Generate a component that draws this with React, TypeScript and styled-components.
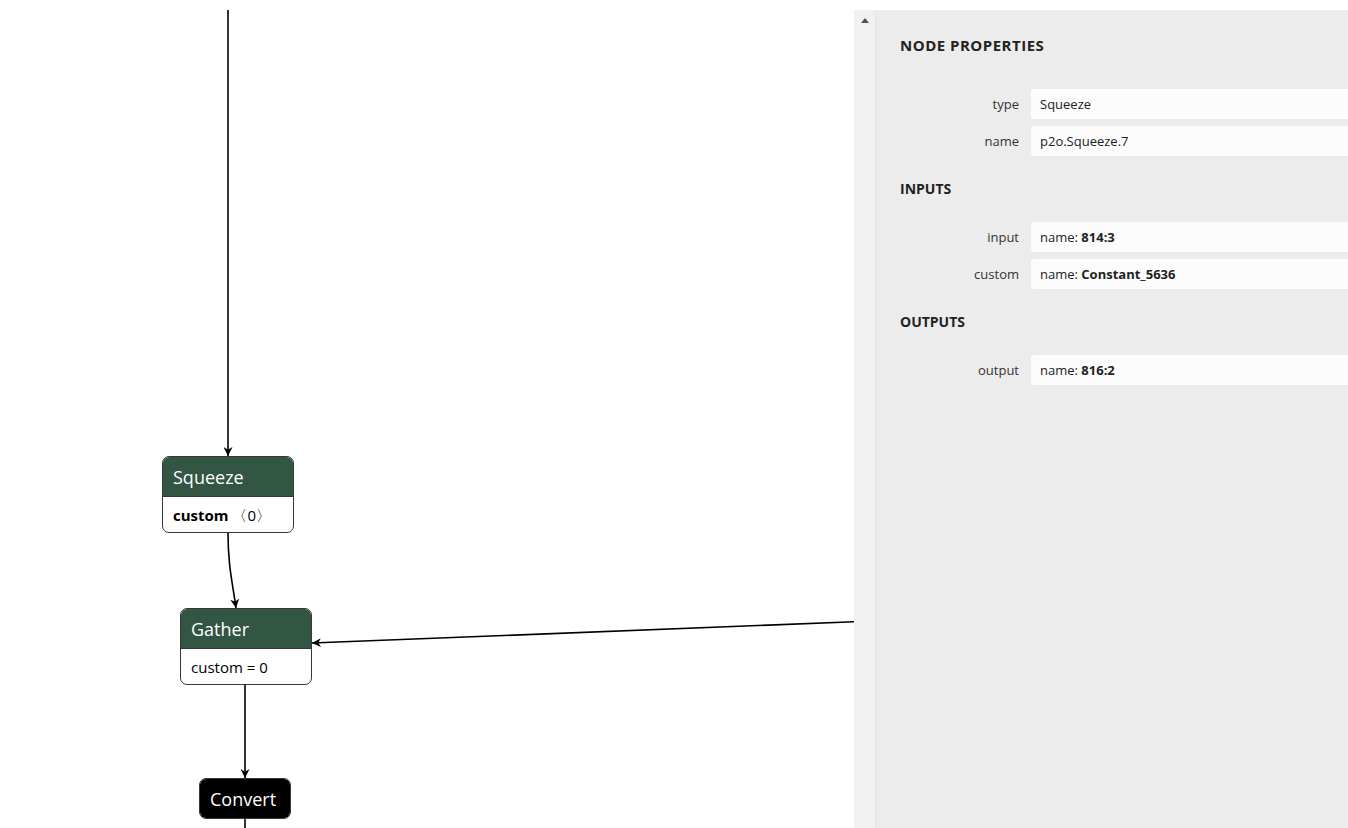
import React from "react";
import styled, { createGlobalStyle } from "styled-components";

const Global = createGlobalStyle`
  html, body { margin: 0; padding: 0; background: #fff; }
  body { font-family: "Open Sans", "Noto Sans", sans-serif; overflow: hidden; }
  #root { width: 1348px; height: 828px; }
`;

const Page = styled.div`
  display: flex;
  width: 1348px;
  height: 828px;
  overflow: hidden;
  background: #ffffff;
`;

const Canvas = styled.div`
  position: relative;
  flex: 1;
  height: 100%;
  overflow: hidden;
`;

const Edges = styled.svg`
  position: absolute;
  left: 0;
  top: 0;
  width: 1000px;
  height: 828px;
  overflow: visible;
`;

const Node = styled.div<{ $x: number; $y: number; $w: number; $dark?: boolean }>`
  position: absolute;
  left: ${(p) => p.$x}px;
  top: ${(p) => p.$y}px;
  width: ${(p) => p.$w}px;
  box-sizing: border-box;
  border: 1.6px solid #383838;
  border-radius: 7px;
  overflow: hidden;
  background: ${(p) => (p.$dark ? "#000" : "#fff")};
  display: flex;
  flex-direction: column;
`;

const NodeHeader = styled.div<{ $bg: string }>`
  height: 39px;
  box-sizing: border-box;
  background: ${(p) => p.$bg};
  color: #fff;
  font-size: 18px;
  line-height: 39px;
  padding: 1px 10px 0;
`;

const NodeBody = styled.div`
  border-top: 1.5px solid #383838;
  height: 36px;
  box-sizing: border-box;
  line-height: 34px;
  padding: 1px 10px 0;
  font-size: 15px;
  color: #000;
  white-space: nowrap;
`;

const Bold = styled.b`
  font-weight: 700;
`;

const Sidebar = styled.div`
  margin-top: 10px;
  width: 494px;
  height: 818px;
  display: flex;
  flex-shrink: 0;
`;

const ScrollTrack = styled.div`
  width: 22px;
  background: #f1f1f1;
  border-right: 1px solid #e6e6e6;
  box-sizing: border-box;
  display: flex;
  justify-content: center;
  padding-top: 8px;
`;

const ArrowUp = styled.div`
  width: 0;
  height: 0;
  border-left: 4px solid transparent;
  border-right: 4px solid transparent;
  border-bottom: 5px solid #505050;
`;

const Panel = styled.div`
  flex: 1;
  background: #ececec;
  padding: 25px 0 0 24px;
  overflow: hidden;
  color: #333;
`;

const Heading = styled.div<{ $first?: boolean; $top?: number }>`
  font-size: ${(p) => (p.$first ? 15 : 14)}px;
  font-weight: 700;
  line-height: 20px;
  padding-top: ${(p) => (p.$first ? 0 : 1)}px;
  height: 20px;
  color: #222;
  letter-spacing: ${(p) => (p.$first ? 0.5 : 0)}px;
  margin-top: ${(p) => p.$top ?? 0}px;
  margin-bottom: ${(p) => (p.$first ? 34 : 23)}px;
`;

const Rows = styled.div`
  display: flex;
  flex-direction: column;
  gap: 7px;
`;

const Row = styled.div`
  display: grid;
  grid-template-columns: 119px 1fr;
  column-gap: 12px;
  align-items: center;
`;

const Label = styled.div`
  text-align: right;
  font-size: 13px;
  color: #333;
`;

const Value = styled.div`
  height: 30px;
  line-height: 30px;
  background: #fcfcfc;
  border-radius: 3px 0 0 3px;
  padding-left: 9px;
  font-size: 13px;
  color: #222;
  margin-right: -10px;
  white-space: nowrap;
`;

const Arrow = () => (
  <marker id="arrow" viewBox="0 0 10 10" refX="10" refY="5" markerWidth="9" markerHeight="9" markerUnits="userSpaceOnUse" orient="auto">
    <path d="M0,0 L10,5 L0,10 L3,5 z" fill="#000" />
  </marker>
);

type RowData = { label: string; value: React.ReactNode };

const Section = ({ title, rows, first, top }: { title: string; rows: RowData[]; first?: boolean; top?: number }) => (
  <>
    <Heading $first={first} $top={top}>{title}</Heading>
    <Rows>
      {rows.map((r) => (
        <Row key={r.label}>
          <Label>{r.label}</Label>
          <Value>{r.value}</Value>
        </Row>
      ))}
    </Rows>
  </>
);

export default function App() {
  return (
    <Page>
      <Global />
      <Canvas>
        <Edges>
          <defs>
            <Arrow />
          </defs>
          <g fill="none" stroke="#000" strokeWidth="1.6">
            <path d="M228,10 L228,456" markerEnd="url(#arrow)" />
            <path d="M228,532 C228,565 232,580 236,608" markerEnd="url(#arrow)" />
            <path d="M245,684 L245,778" markerEnd="url(#arrow)" />
            <path d="M245,818 L245,840" />
            <path d="M900,620 L312,643" markerEnd="url(#arrow)" />
          </g>
        </Edges>
        <Node $x={162} $y={456} $w={132}>
          <NodeHeader $bg="#335544">Squeeze</NodeHeader>
          <NodeBody>
            <Bold>custom</Bold> 〈0〉
          </NodeBody>
        </Node>
        <Node $x={180} $y={608} $w={132}>
          <NodeHeader $bg="#335544">Gather</NodeHeader>
          <NodeBody>custom = 0</NodeBody>
        </Node>
        <Node $x={199} $y={778} $w={92} $dark>
          <NodeHeader $bg="#000">Convert</NodeHeader>
        </Node>
      </Canvas>
      <Sidebar>
        <ScrollTrack>
          <ArrowUp />
        </ScrollTrack>
        <Panel>
          <Section
            first
            title="NODE PROPERTIES"
            rows={[
              { label: "type", value: "Squeeze" },
              { label: "name", value: "p2o.Squeeze.7" },
            ]}
          />
          <Section
            top={22}
            title="INPUTS"
            rows={[
              { label: "input", value: <>name: <Bold>814:3</Bold></> },
              { label: "custom", value: <>name: <Bold>Constant_5636</Bold></> },
            ]}
          />
          <Section
            top={22}
            title="OUTPUTS"
            rows={[{ label: "output", value: <>name: <Bold>816:2</Bold></> }]}
          />
        </Panel>
      </Sidebar>
    </Page>
  );
}
